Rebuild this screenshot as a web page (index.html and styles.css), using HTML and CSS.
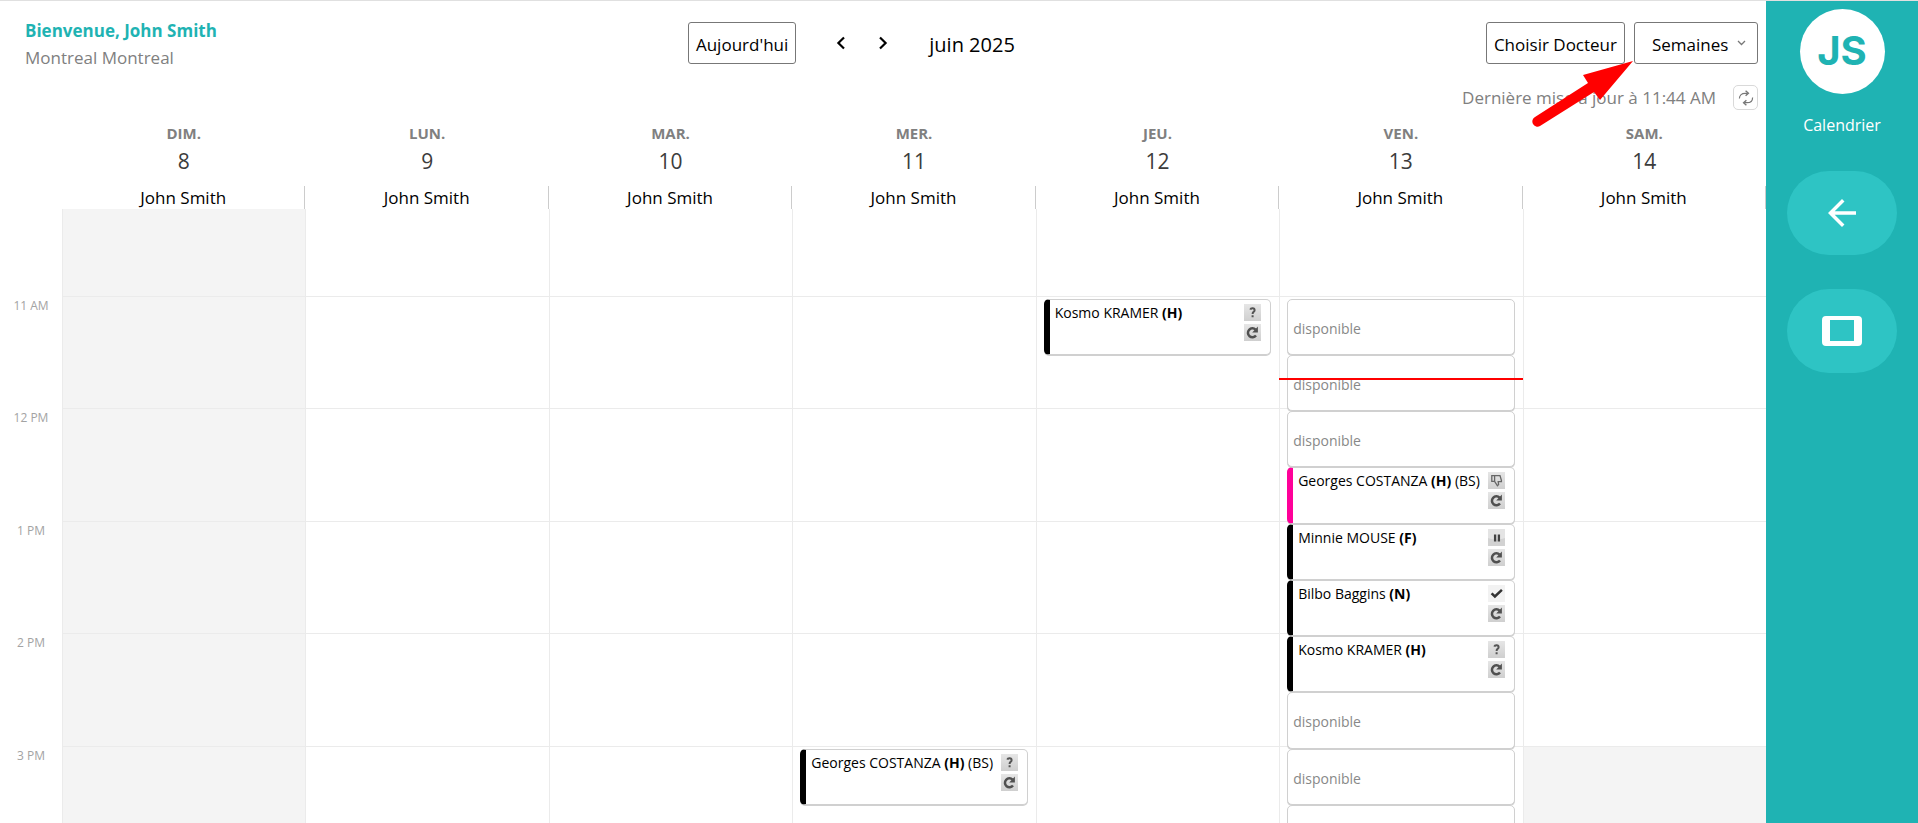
FILE: index.html
```html
<!DOCTYPE html>
<html lang="fr">
<head>
  <meta charset="UTF-8">
  <meta name="viewport" content="width=device-width, initial-scale=1.0">
  <title>Calendrier</title>
  <link rel="stylesheet" href="styles.css">
</head>
<body>
  <!-- Shared icons -->
  <svg width="0" height="0" class="sprite" aria-hidden="true">
    <linearGradient id="tile" x1="0" y1="0" x2="0" y2="1">
      <stop offset="0" stop-color="#e6e6e6"/>
      <stop offset="1" stop-color="#cfcfcf"/>
    </linearGradient>
    <symbol id="icon-question" viewBox="0 0 17 17">
      <rect width="17" height="17" fill="url(#tile)"/>
      <path d="M6.3 5.6C6.8 3.9 10.6 3.8 10.6 6.2c0 1.6-2 1.7-2 3.7M8.6 11.2v2" fill="none" stroke="#555" stroke-width="2"/>
    </symbol>
    <symbol id="icon-redo" viewBox="0 0 17 17">
      <rect width="17" height="17" fill="url(#tile)"/>
      <path d="M12 11.6A4.5 4.5 0 1 1 11.6 5.6" fill="none" stroke="#505050" stroke-width="2.5"/>
      <path d="M13.9 2.6v6H8.2z" fill="#505050"/>
    </symbol>
    <symbol id="icon-down" viewBox="0 0 17 17">
      <rect width="17" height="17" fill="url(#tile)"/>
      <path d="M6.6 3.6h5.4l1.4 4.8v1.2h-3.2l.4 3-1.2 1.2L6.6 9.4M3.8 3.6h2.8v5.8H3.8z" fill="none" stroke="#666" stroke-width="1.3"/>
    </symbol>
    <symbol id="icon-pause" viewBox="0 0 17 17">
      <rect width="17" height="17" fill="#e4e4e4"/>
      <path d="M0 9Q8 12 17 9V17H0z" fill="#d2d2d2"/>
      <path d="M7.1 5.4v7M10.9 5.4v7" stroke="#444" stroke-width="2.3"/>
    </symbol>
    <symbol id="icon-check" viewBox="0 0 17 17">
      <rect width="17" height="17" fill="#f2f2f2"/>
      <path d="M3.6 8.4l3.3 3.1 7-6.6" fill="none" stroke="#333" stroke-width="2.5"/>
    </symbol>
  </svg>

  <div class="app">
    <main class="main">
      <header class="topbar">
        <div class="welcome">
          <div class="welcome-name">Bienvenue, John Smith</div>
          <div class="welcome-place">Montreal Montreal</div>
        </div>
        <div class="nav">
          <button class="button">Aujourd'hui</button>
          <div class="arrows">
            <button class="arrow" aria-label="Précédent">
              <svg width="10" height="14" viewBox="0 0 10 14"><path d="M8 1.5L2.4 7 8 12.5" fill="none" stroke="#000" stroke-width="2.2"/></svg>
            </button>
            <button class="arrow" aria-label="Suivant">
              <svg width="10" height="14" viewBox="0 0 10 14"><path d="M2 1.5L7.6 7 2 12.5" fill="none" stroke="#000" stroke-width="2.2"/></svg>
            </button>
          </div>
          <div class="month">juin 2025</div>
        </div>
        <div class="actions">
          <button class="button">Choisir Docteur</button>
          <div class="select-wrap">
            <select class="view-select" aria-label="Vue">
              <option>Semaines</option>
            </select>
            <svg class="chevron" width="9" height="6" viewBox="0 0 9 6"><path d="M1 1l3.5 3.5L8 1" fill="none" stroke="#777" stroke-width="1.3"/></svg>
            <svg class="pointer" width="102" height="68" viewBox="0 0 102 68">
              <path d="M101 1L51 15l5 8L3 57a5 5 0 0 0 5 9l54-34 6 8z" fill="#f00"/>
            </svg>
          </div>
        </div>
      </header>

      <div class="update">
        <span>Dernière mise à jour à 11:44 AM</span>
        <button class="refresh" aria-label="Actualiser">
          <svg width="16" height="16" viewBox="0 0 16 16">
            <path d="M1.4 8.6C1.4 5 4 3.3 7 3.3h2.6M14.6 7.4c0 3.6-2.6 5.3-5.6 5.3H6.4" fill="none" stroke="#777" stroke-width="1.2"/>
            <path d="M7.6.8l2.8 2.5-2.8 2.5M8.4 10.2l-2.8 2.5 2.8 2.5" fill="none" stroke="#777" stroke-width="1.4"/>
          </svg>
        </button>
      </div>

      <div class="week week-head">
        <div></div>
        <div class="head"><div class="head-day">DIM.</div><div class="head-date">8</div><div class="head-doctor">John Smith</div></div>
        <div class="head"><div class="head-day">LUN.</div><div class="head-date">9</div><div class="head-doctor">John Smith</div></div>
        <div class="head"><div class="head-day">MAR.</div><div class="head-date">10</div><div class="head-doctor">John Smith</div></div>
        <div class="head"><div class="head-day">MER.</div><div class="head-date">11</div><div class="head-doctor">John Smith</div></div>
        <div class="head"><div class="head-day">JEU.</div><div class="head-date">12</div><div class="head-doctor">John Smith</div></div>
        <div class="head"><div class="head-day">VEN.</div><div class="head-date">13</div><div class="head-doctor">John Smith</div></div>
        <div class="head"><div class="head-day">SAM.</div><div class="head-date">14</div><div class="head-doctor">John Smith</div></div>
      </div>

      <div class="week week-body">
        <div class="hours">
          <div></div>
          <div class="hour">11 AM</div>
          <div class="hour">12 PM</div>
          <div class="hour">1 PM</div>
          <div class="hour">2 PM</div>
          <div class="hour">3 PM</div>
        </div>
        <div class="day closed">
          <div class="cell"></div><div class="cell"></div><div class="cell"></div><div class="cell"></div><div class="cell"></div><div class="cell"></div>
        </div>
        <div class="day">
          <div class="cell"></div><div class="cell"></div><div class="cell"></div><div class="cell"></div><div class="cell"></div><div class="cell"></div>
        </div>
        <div class="day">
          <div class="cell"></div><div class="cell"></div><div class="cell"></div><div class="cell"></div><div class="cell"></div><div class="cell"></div>
        </div>
        <div class="day">
          <div class="cell"></div><div class="cell"></div><div class="cell"></div><div class="cell"></div><div class="cell"></div><div class="cell"></div>
          <div class="slots">
            <div class="event at-3pm">
              <div class="event-name">Georges COSTANZA <b>(H)</b> (BS)</div>
              <div class="event-icons"><svg><use href="#icon-question"/></svg><svg><use href="#icon-redo"/></svg></div>
            </div>
          </div>
        </div>
        <div class="day">
          <div class="cell"></div><div class="cell"></div><div class="cell"></div><div class="cell"></div><div class="cell"></div><div class="cell"></div>
          <div class="slots">
            <div class="event">
              <div class="event-name">Kosmo KRAMER <b>(H)</b></div>
              <div class="event-icons"><svg><use href="#icon-question"/></svg><svg><use href="#icon-redo"/></svg></div>
            </div>
          </div>
        </div>
        <div class="day">
          <div class="cell"></div><div class="cell"></div><div class="cell"></div><div class="cell"></div><div class="cell"></div><div class="cell"></div>
          <div class="slots">
            <div class="free">disponible</div>
            <div class="free">disponible</div>
            <div class="free">disponible</div>
            <div class="event pink">
              <div class="event-name">Georges COSTANZA <b>(H)</b> (BS)</div>
              <div class="event-icons"><svg><use href="#icon-down"/></svg><svg><use href="#icon-redo"/></svg></div>
            </div>
            <div class="event">
              <div class="event-name">Minnie MOUSE <b>(F)</b></div>
              <div class="event-icons"><svg><use href="#icon-pause"/></svg><svg><use href="#icon-redo"/></svg></div>
            </div>
            <div class="event">
              <div class="event-name">Bilbo Baggins <b>(N)</b></div>
              <div class="event-icons"><svg><use href="#icon-check"/></svg><svg><use href="#icon-redo"/></svg></div>
            </div>
            <div class="event">
              <div class="event-name">Kosmo KRAMER <b>(H)</b></div>
              <div class="event-icons"><svg><use href="#icon-question"/></svg><svg><use href="#icon-redo"/></svg></div>
            </div>
            <div class="free">disponible</div>
            <div class="free">disponible</div>
            <div class="free"></div>
          </div>
          <div class="now"></div>
        </div>
        <div class="day">
          <div class="cell"></div><div class="cell"></div><div class="cell"></div><div class="cell"></div><div class="cell"></div><div class="cell closed"></div>
        </div>
      </div>
    </main>

    <aside class="sidebar">
      <div class="avatar">JS</div>
      <div class="sidebar-title">Calendrier</div>
      <button class="side-button" aria-label="Retour">
        <svg width="42" height="42" viewBox="0 0 24 24"><path d="M20 11H7.83l5.59-5.59L12 4l-8 8 8 8 1.41-1.41L7.83 13H20z" fill="#fff"/></svg>
      </button>
      <button class="side-button" aria-label="Tablette">
        <svg width="40" height="30" viewBox="0 0 40 30"><path d="M4 0h32q4 0 4 4v22q0 4-4 4H4q-4 0-4-4V4q0-4 4-4zm4 4v21h24V4z" fill="#fff" fill-rule="evenodd"/></svg>
      </button>
    </aside>
  </div>
</body>
</html>
```
FILE: styles.css
```css
* {
  box-sizing: border-box;
}
body {
  margin: 0;
  font-family: "Open Sans", "Noto Sans", sans-serif;
  font-size: 17px;
  color: #000;
  background-color: #fff;
}
button,
select {
  font: inherit;
  color: inherit;
  cursor: pointer;
}
.sprite {
  position: absolute;
}
.app {
  display: flex;
  height: 100vh;
  overflow: hidden;
  border-top: 1px solid #e0e0e0;
}
.main {
  flex: 1;
  min-width: 0;
  display: flex;
  flex-direction: column;
}

/* Top bar */
.topbar {
  display: flex;
  justify-content: space-between;
  align-items: flex-start;
  padding: 16px 8px 0 25px;
}
.welcome {
  line-height: 27px;
}
.welcome-name {
  font-weight: 700;
  color: #1fb3b3;
}
.welcome-place {
  color: #808080;
}
.nav,
.actions {
  display: flex;
  align-items: center;
  padding-top: 5px;
}
.actions {
  gap: 9px;
}
.button,
.view-select {
  height: 42px;
  padding: 2px 7px 0;
  border: 1px solid #777;
  border-radius: 3px;
  background-color: #fff;
}
.arrows {
  display: flex;
  gap: 12px;
  margin: 0 26px 0 30px;
}
.arrow {
  display: flex;
  align-items: center;
  justify-content: center;
  width: 30px;
  height: 30px;
  padding: 0;
  border: none;
  background: none;
}
.month {
  padding: 2px 0 0 5px;
  font-size: 20px;
}
.select-wrap {
  position: relative;
}
.view-select {
  appearance: none;
  padding: 2px 28px 0 17px;
}
.chevron {
  position: absolute;
  right: 12px;
  top: 18px;
  pointer-events: none;
}
.pointer {
  position: absolute;
  right: 100%;
  top: 38px;
  z-index: 2;
  pointer-events: none;
}
.update {
  display: flex;
  justify-content: flex-end;
  align-items: center;
  gap: 17px;
  padding: 14px 8px 0 0;
  color: #808080;
}
.refresh {
  display: flex;
  align-items: center;
  justify-content: center;
  width: 25px;
  height: 25px;
  padding: 0;
  border: 1px solid #d9d9d9;
  border-radius: 5px;
  background-color: #fff;
}

/* Week grid */
.week {
  display: grid;
  grid-template-columns: 62px repeat(7, 1fr);
}
.week-head {
  padding-top: 11px;
  text-align: center;
}
.head-day {
  font-size: 15px;
  font-weight: 700;
  line-height: 24px;
  color: #808080;
}
.head-date {
  padding-bottom: 8px;
  font-size: 21px;
  line-height: 33px;
  color: #3c3c3c;
}
.head-doctor {
  padding-top: 1px;
  line-height: 22px;
  border-right: 1px solid #ccc;
}
.week-body {
  flex: 1;
  min-height: 0;
}
.hours,
.day {
  display: grid;
  grid-template-rows: 87px repeat(2, 112px 113px) 112px;
  position: relative;
}
.hour {
  padding-top: 1px;
  font-size: 12px;
  line-height: 18px;
  text-align: center;
  color: #a3a3a3;
}
.day {
  border-left: 1px solid #ebebeb;
}
.cell + .cell {
  border-top: 1px solid #ebebeb;
}
.closed {
  background-color: #f4f4f4;
}

/* Appointments lie over the hour cells, one row per half hour */
.slots {
  position: absolute;
  inset: 0;
  display: grid;
  grid-auto-rows: 56px 56px 56px 57px;
  grid-template-rows: 56px 56px 56px 57px 56px 56px 56px 57px;
  padding: 90px 8px 0 7px;
}
.event,
.free {
  border: 1px solid #d0d0d0;
  border-radius: 5px;
  box-shadow: 0 1px 0 #d0d0d0;
  background-color: #fff;
}
.free {
  display: flex;
  align-items: center;
  padding: 2px 0 0 5px;
  font-size: 14px;
  color: #888;
}
.event {
  display: flex;
  justify-content: space-between;
  border-left: 6px solid #000;
  padding: 4px 9px 0 5px;
  font-size: 14px;
}
.event-name {
  line-height: 18px;
  white-space: nowrap;
}
.event-icons {
  display: flex;
  flex-direction: column;
  gap: 3px;
}
.event-icons svg {
  display: block;
  width: 17px;
  height: 17px;
}
.pink {
  border-left-color: #ff0099;
}
.at-3pm {
  grid-row: 9;
}
.now {
  position: absolute;
  top: 169px;
  left: -1px;
  right: 0;
  height: 2px;
  background-color: #f00;
}

/* Sidebar */
.sidebar {
  display: flex;
  flex-direction: column;
  align-items: center;
  width: 152px;
  padding-top: 8px;
  background-color: #1fb3b3;
}
.avatar {
  width: 85px;
  height: 85px;
  border-radius: 50%;
  background-color: #fff;
  font-family: Inter, sans-serif;
  font-size: 40px;
  font-weight: 700;
  line-height: 84px;
  text-align: center;
  color: #1fb3b3;
}
.sidebar-title {
  margin: 20px 0 34px;
  font-size: 16px;
  line-height: 23px;
  color: #fff;
}
.side-button {
  display: flex;
  align-items: center;
  justify-content: center;
  width: 110px;
  height: 84px;
  margin-bottom: 34px;
  padding: 0;
  border: none;
  border-radius: 42px;
  background-color: #2ec4c4;
}
```
